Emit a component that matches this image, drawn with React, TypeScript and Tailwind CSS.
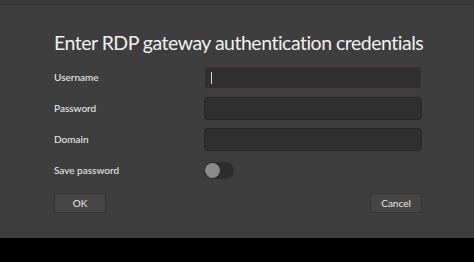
import { useState } from "react";

const font = { fontFamily: '"Lato", "Noto Sans", sans-serif' };

function Field({ label, focused }: { label: string; focused?: boolean }) {
  return (
    <div className="flex items-center h-[23px]">
      <label className="w-[150px] text-[10px] font-medium text-[#e8e8e8]">{label}</label>
      <div
        className={`relative flex-1 h-[23px] rounded-[4px] bg-[#2f2f2f] border ${
          focused ? "border-[#4a3d35]" : "border-[#252525]"
        }`}
      >
        {focused && <span className="absolute left-[6px] top-[5px] w-px h-[12px] bg-[#d8d8d8]" />}
      </div>
    </div>
  );
}

export default function App() {
  const [save, setSave] = useState(false);

  return (
    <div className="w-[474px] h-[262px] bg-black flex flex-col" style={font}>
      <div className="h-[5px] bg-[#393939] border-b border-[#2f2f2f]" />
      <div className="h-[233px] bg-[#3e3e3e] pl-[54px] pr-[52px] pt-[24px]">
        <h1 className="text-[19.5px] leading-[28px] tracking-[-0.5px] text-[#f0f0f0] whitespace-nowrap">
          Enter RDP gateway authentication credentials
        </h1>
        <div className="mt-[9px] flex flex-col gap-[8px]">
          <Field label="Username" focused />
          <Field label="Password" />
          <Field label="Domain" />
          <div className="flex items-center h-[23px]">
            <label className="w-[150px] text-[10px] font-medium text-[#e8e8e8]">Save password</label>
            <button
              onClick={() => setSave(!save)}
              className="w-[30px] h-[17px] rounded-full bg-[#2c2c2c] flex items-center px-[1px]"
            >
              <span className="w-[15px] h-[15px] rounded-full bg-[#8a8a8a]" />
            </button>
          </div>
        </div>
        <div className="mt-[11px] flex justify-between">
          <button className="w-[52px] h-[20px] rounded-[3px] bg-[#464646] border border-[#333] text-[10px] text-[#e8e8e8]">
            OK
          </button>
          <button className="w-[52px] h-[20px] rounded-[3px] bg-[#464646] border border-[#333] text-[10px] text-[#e8e8e8]">
            Cancel
          </button>
        </div>
      </div>
    </div>
  );
}
